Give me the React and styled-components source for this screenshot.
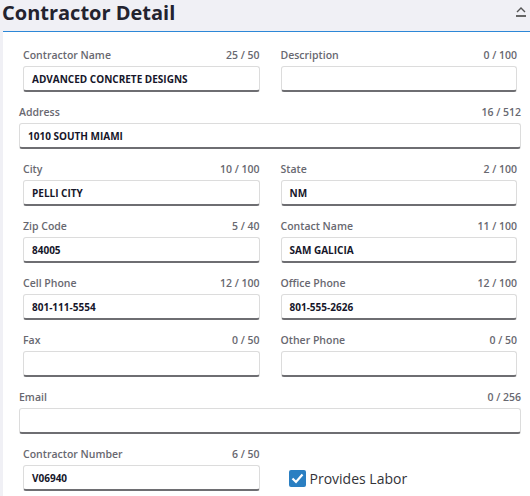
import React from 'react';
import styled, { createGlobalStyle } from 'styled-components';

const GlobalStyle = createGlobalStyle`
    body {
        margin: 0;
        background: #f0f0f5;
        font-family: "Open Sans", "Liberation Sans", sans-serif;
    }
`;

const Page = styled.div`
    width: 530px;
    height: 496px;
    overflow: hidden;
    background: #f0f0f5;
`;

const Header = styled.div`
    height: 31px;
    display: flex;
    align-items: center;
    justify-content: space-between;
    padding: 0 3px 0 2px;
`;

const Title = styled.h1`
    margin: 0;
    font-size: 20px;
    font-weight: 700;
    color: #23232f;
    line-height: 1;
    margin-top: -6px;
`;

const Collapse = styled.button`
    border: 0;
    background: none;
    padding: 0;
    width: 12px;
    height: 14px;
    align-self: flex-start;
    margin-top: 5px;
    cursor: pointer;
`;

const Card = styled.div`
    margin-left: 3px;
    border-top: 1px solid #2d87d7;
    background: #ffffff;
    padding: 16px 9px 0 16px;
    height: 100%;
`;

const Form = styled.div`
    display: grid;
    grid-template-columns: 1fr;
    row-gap: 13px;
`;

const Pair = styled.div`
    display: grid;
    grid-template-columns: 1fr 1fr;
    column-gap: 21px;
    padding: 0 4px;
`;

const Field = styled.div`
    display: flex;
    flex-direction: column;
`;

const LabelRow = styled.div`
    display: flex;
    justify-content: space-between;
    height: 14px;
    line-height: 14px;
    margin-bottom: 4px;
    font-size: 10.5px;
    font-weight: 600;
    color: #686870;
`;

const Input = styled.div`
    box-sizing: border-box;
    height: 26px;
    border: 1px solid #dcdcdc;
    border-bottom: 2px solid #6e6e72;
    border-radius: 3px;
    padding: 0 8px;
    display: flex;
    align-items: center;
    font-size: 10px;
    font-weight: 700;
    color: #16162a;
    text-transform: uppercase;
`;

const CheckWrap = styled.label`
    align-self: end;
    height: 26px;
    display: flex;
    align-items: center;
    gap: 4px;
    padding-left: 8px;
    font-size: 14px;
    color: #333338;
`;

const Box = styled.span`
    width: 17px;
    height: 17px;
    border-radius: 2px;
    background: #2a7fc2;
    display: flex;
    align-items: center;
    justify-content: center;
`;

function TextField({ label, value = '', max }) {
    return (
        <Field>
            <LabelRow>
                <span>{label}</span>
                <span>{value.length} / {max}</span>
            </LabelRow>
            <Input>{value}</Input>
        </Field>
    );
}

export default function App() {
    return (
        <Page>
            <GlobalStyle />
            <Header>
                <Title>Contractor Detail</Title>
                <Collapse aria-label="collapse">
                    <svg width="12" height="14" viewBox="0 0 12 14">
                        <polyline points="2,7 6,3 10,7" fill="none" stroke="#555" strokeWidth="1.4" />
                        <rect x="1" y="10" width="10" height="2" fill="#666" />
                    </svg>
                </Collapse>
            </Header>
            <Card>
                <Form>
                    <Pair>
                        <TextField label="Contractor Name" value="ADVANCED CONCRETE DESIGNS" max={50} />
                        <TextField label="Description" max={100} />
                    </Pair>
                    <TextField label="Address" value="1010 SOUTH MIAMI" max={512} />
                    <Pair>
                        <TextField label="City" value="PELLI CITY" max={100} />
                        <TextField label="State" value="NM" max={100} />
                    </Pair>
                    <Pair>
                        <TextField label="Zip Code" value="84005" max={40} />
                        <TextField label="Contact Name" value="SAM GALICIA" max={100} />
                    </Pair>
                    <Pair>
                        <TextField label="Cell Phone" value="801-111-5554" max={100} />
                        <TextField label="Office Phone" value="801-555-2626" max={100} />
                    </Pair>
                    <Pair>
                        <TextField label="Fax" max={50} />
                        <TextField label="Other Phone" max={50} />
                    </Pair>
                    <TextField label="Email" max={256} />
                    <Pair>
                        <TextField label="Contractor Number" value="V06940" max={50} />
                        <CheckWrap>
                            <Box>
                                <svg width="13" height="11" viewBox="0 0 13 11">
                                    <polyline points="1.5,5.5 5,9 11.5,1.5" fill="none" stroke="#fff" strokeWidth="2.2" />
                                </svg>
                            </Box>
                            Provides Labor
                        </CheckWrap>
                    </Pair>
                </Form>
            </Card>
        </Page>
    );
}
